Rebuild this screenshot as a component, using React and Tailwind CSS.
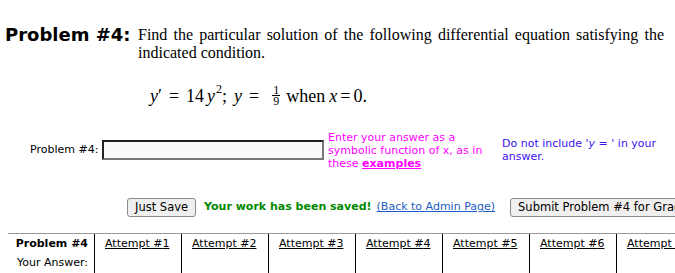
import React from 'react'

const serif = { fontFamily: '"Liberation Serif", "Times New Roman", serif' }

const attempts = [1, 2, 3, 4, 5, 6, 7]

const Fraction = ({ top, bottom }) => (
  <span className="inline-flex flex-col items-center align-middle text-[12px] leading-[10px] mx-[6px] relative -top-[1px]">
    <span className="px-[1px] border-b border-black">{top}</span>
    <span className="px-[1px]">{bottom}</span>
  </span>
)

export default function App() {
  return (
    <div
      className="w-[675px] h-[273px] overflow-hidden bg-white text-black"
      style={{ fontFamily: '"DejaVu Sans", Verdana, sans-serif' }}
    >
      {/* problem statement */}
      <div className="flex pt-[25px] pl-[5px]">
        <div className="text-[18px] font-bold leading-[20px] w-[133px] shrink-0">Problem #4:</div>
        <div className="w-[526px] text-[16px] leading-[18px] text-justify pt-[1px]" style={serif}>
          Find the particular solution of the following differential equation satisfying the indicated condition.
        </div>
      </div>

      {/* equation */}
      <div className="pl-[150px] mt-[22px] h-[24px] flex items-center text-[18px] whitespace-nowrap" style={serif}>
        <span className="italic">y</span>
        <span>′</span>
        <span className="mx-[7px]">=</span>
        <span>14</span>
        <span className="italic ml-[3px]">y</span>
        <span className="text-[12px] relative -top-[7px] ml-[1px]">2</span>
        <span>;</span>
        <span className="italic ml-[7px]">y</span>
        <span className="mx-[7px]">=</span>
        <Fraction top="1" bottom="9" />
        <span>when</span>
        <span className="italic ml-[4px]">x</span>
        <span className="mx-[3px]">=</span>
        <span>0.</span>
      </div>

      {/* answer row */}
      <div className="flex items-center mt-[24px] h-[36px]">
        <div className="w-[102px] text-[11px] pl-[30px] shrink-0">Problem #4:</div>
        <input
          type="text"
          className="w-[222px] h-[20px] shrink-0 bg-[#fafafa] border-2 border-t-[#222] border-l-[#222] border-b-[#777] border-r-[#777] outline-none"
        />
        <div className="w-[174px] shrink-0 pl-[4px] text-[11px] leading-[13px] text-[#ff00ff]">
          Enter your answer as a symbolic function of x, as in these{' '}
          <span className="font-bold underline">examples</span>
        </div>
        <div className="w-[170px] shrink-0 pl-[4px] text-[11px] leading-[13px] text-[#3b12f2]">
          Do not include '<span className="italic">y</span> = ' in your answer.
        </div>
      </div>

      {/* buttons */}
      <div className="flex items-center mt-[30px] pl-[127px] whitespace-nowrap">
        <button className="h-[19px] px-[7px] text-[11.5px] leading-none bg-[#efefef] border border-[#8a8a8a] rounded-[3px] shrink-0">
          Just Save
        </button>
        <span className="ml-[8px] text-[11px] font-bold text-[#008a00]">Your work has been saved!</span>
        <a href="#" className="ml-[5px] text-[11px] text-[#1d5cc4] underline">(Back to Admin Page)</a>
        <button className="ml-[15px] h-[19px] px-[7px] text-[11.5px] leading-none bg-[#efefef] border border-[#8a8a8a] rounded-[3px] shrink-0">
          Submit Problem #4 for Grading
        </button>
      </div>

      {/* attempts table */}
      <div className="mt-[16px] ml-[8px] border-t border-[#999] flex text-[11px] whitespace-nowrap">
        <div className="w-[87px] shrink-0 border-r border-black text-right pr-[6px]">
          <div className="h-[19px] leading-[19px] font-bold">Problem #4</div>
          <div className="h-[20px] leading-[20px]">Your Answer:</div>
        </div>
        {attempts.map((n) => (
          <div key={n} className="w-[87px] shrink-0 border-r border-black pl-[10px]">
            <div className="h-[19px] leading-[19px] underline">Attempt #{n}</div>
            <div className="h-[20px]"></div>
          </div>
        ))}
      </div>
    </div>
  )
}
